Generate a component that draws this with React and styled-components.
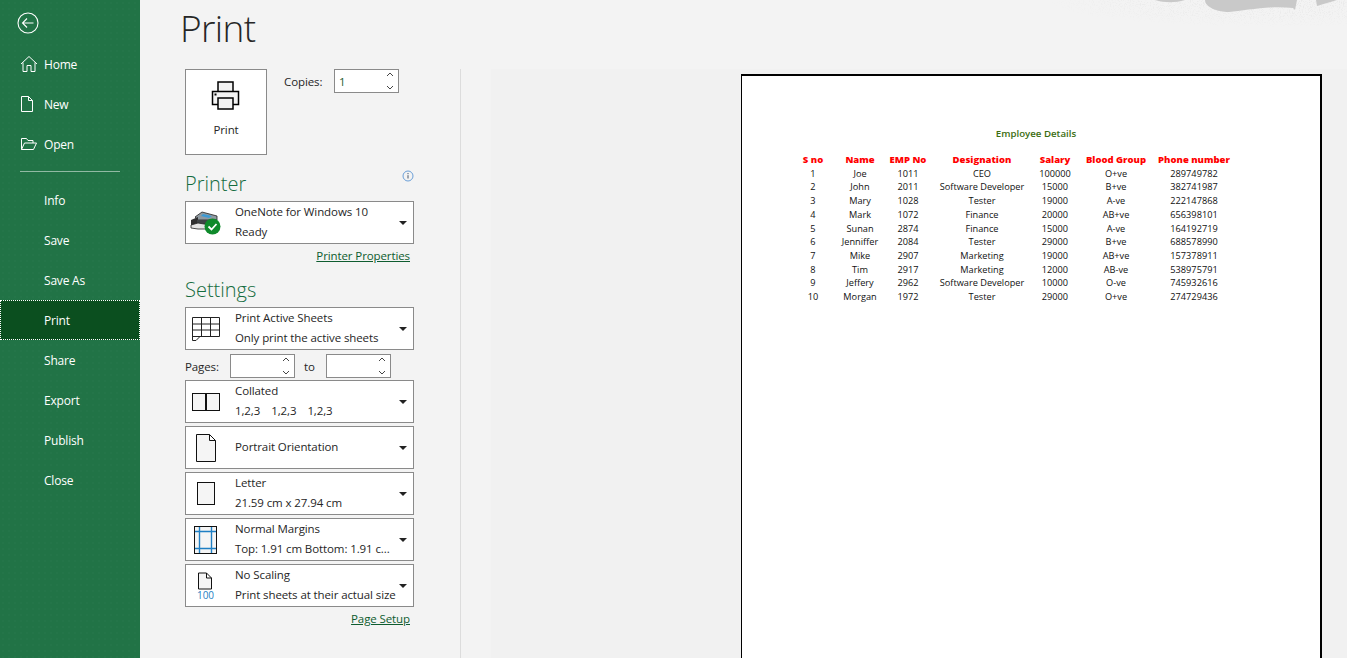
import React from 'react';
import styled, { createGlobalStyle } from 'styled-components';

const GlobalStyle = createGlobalStyle`
  html, body {
    margin: 0;
    padding: 0;
    background: #f3f3f3;
    font-family: "Open Sans", "Liberation Sans", sans-serif;
  }
`;

const navTop = ['Home', 'New', 'Open'];
const navBottom = ['Info', 'Save', 'Save As', 'Print', 'Share', 'Export', 'Publish', 'Close'];

const employees = [
  ['1', 'Joe', '1011', 'CEO', '100000', 'O+ve', '289749782'],
  ['2', 'John', '2011', 'Software Developer', '15000', 'B+ve', '382741987'],
  ['3', 'Mary', '1028', 'Tester', '19000', 'A-ve', '222147868'],
  ['4', 'Mark', '1072', 'Finance', '20000', 'AB+ve', '656398101'],
  ['5', 'Sunan', '2874', 'Finance', '15000', 'A-ve', '164192719'],
  ['6', 'Jenniffer', '2084', 'Tester', '29000', 'B+ve', '688578990'],
  ['7', 'Mike', '2907', 'Marketing', '19000', 'AB+ve', '157378911'],
  ['8', 'Tim', '2917', 'Marketing', '12000', 'AB-ve', '538975791'],
  ['9', 'Jeffery', '2962', 'Software Developer', '10000', 'O-ve', '745932616'],
  ['10', 'Morgan', '1972', 'Tester', '29000', 'O+ve', '274729436'],
];
const columns = ['S no', 'Name', 'EMP No', 'Designation', 'Salary', 'Blood Group', 'Phone number'];
const columnWidths = [46, 48, 48, 100, 46, 76, 80];

// 아이콘
const BackIcon = () => (
  <svg width="22" height="22" viewBox="0 0 22 22" fill="none" stroke="#fff" strokeWidth="1.1">
    <circle cx="11" cy="11" r="10" />
    <path d="M5.5 11h11M10 6.5 5.5 11l4.500 4.500" />
  </svg>
);

const HomeIcon = () => (
  <svg width="18" height="18" viewBox="0 0 18 18" fill="none" stroke="#fff" strokeWidth="1">
    <path d="M1 9 9 1.500 17 9M3 7.500V16.500H7V10.500H11V16.500H15V7.500" />
  </svg>
);

const NewIcon = () => (
  <svg width="14" height="18" viewBox="0 0 14 18" fill="none" stroke="#fff" strokeWidth="1">
    <path d="M1.500 1.500H8.500L12.500 5.500V16.500H1.500ZM8.500 1.500V5.500H12.500" />
  </svg>
);

const OpenIcon = () => (
  <svg width="18" height="14" viewBox="0 0 18 14" fill="none" stroke="#fff" strokeWidth="1">
    <path d="M1.500 12.500V1.500H6.500L8 3.500H13V6M1.500 12.500 4.500 6H16.500L13.500 12.500Z" />
  </svg>
);

const PrinterIcon = () => (
  <svg width="30" height="30" viewBox="0 0 30 30" fill="#f3f3f3" stroke="#000" strokeWidth="1.500">
    <rect x="7" y="1" width="15" height="10" />
    <rect x="1.500" y="10.500" width="26" height="13" />
    <rect x="7" y="17" width="15" height="11" />
    <rect x="3.500" y="12.500" width="2" height="2" fill="#000" stroke="none" />
  </svg>
);

const InfoIcon = () => (
  <svg width="12" height="12" viewBox="0 0 12 12" fill="none">
    <circle cx="6" cy="6" r="5" stroke="#6a9fd8" />
    <path d="M6 5.200v3.300M6 3v1.200" stroke="#44546a" />
  </svg>
);

const OneNotePrinterIcon = () => (
  <svg width="32" height="26" viewBox="0 0 32 26">
    <path d="M5 7 12 2 27 6 27 10 8 10Z" fill="#8f9aa1" stroke="#222" strokeWidth="0.800" />
    <path d="M13 4 22 6 19 8 11 6Z" fill="#3c9bd6" />
    <path d="M1 10 8 7 8 17 1 15Z" fill="#303030" />
    <path d="M7 10H27V17H7Z" fill="#3f4346" />
    <path d="M1 15 8 13 20 15 20 19 8 19 1 18Z" fill="#e4e4e4" stroke="#222" strokeWidth="0.800" />
    <circle cx="22.500" cy="16.500" r="8" fill="#0f8a2b" />
    <path d="M18.500 16.500 21.500 19.500 26.500 14" fill="none" stroke="#fff" strokeWidth="1.800" />
  </svg>
);

const SheetsIcon = () => (
  <svg width="30" height="26" viewBox="0 0 30 26" fill="none" stroke="#222" strokeWidth="1">
    <path d="M1.500 1.500H28.500V20.500H9L5 24.500H1.500ZM1.500 8H28.500M1.500 14H28.500M1.500 20.500H9M10.500 1.500V20.500M19.500 1.500V20.500" />
  </svg>
);

const CollatedIcon = () => (
  <svg width="30" height="20" viewBox="0 0 30 20" fill="#f5f5f5" stroke="#111" strokeWidth="1">
    <rect x="1.500" y="1.500" width="27" height="17" />
    <path d="M15 1.500V18.500" strokeWidth="2" />
  </svg>
);

const PortraitIcon = () => (
  <svg width="22" height="30" viewBox="0 0 22 30" fill="#f5f5f5" stroke="#111" strokeWidth="1">
    <path d="M1.500 1.500H14.500L20.500 7.500V28.500H1.500ZM14.500 1.500V7.500H20.500" />
  </svg>
);

const LetterIcon = () => (
  <svg width="18" height="24" viewBox="0 0 18 24" fill="#f5f5f5" stroke="#111" strokeWidth="1">
    <rect x="0.500" y="0.500" width="17" height="22" />
  </svg>
);

const MarginsIcon = () => (
  <svg width="24" height="28" viewBox="0 0 24 28" fill="#f5f5f5">
    <rect x="0.500" y="0.500" width="22" height="27" stroke="#111" />
    <path d="M5.500 1V27M17.500 1V27M1 5.500H22M1 22.500H22" stroke="#1f7fc4" strokeWidth="1.400" fill="none" />
  </svg>
);

const ScalingIcon = () => (
  <svg width="16" height="18" viewBox="0 0 16 18" fill="#f5f5f5" stroke="#111" strokeWidth="1">
    <path d="M1.500 1H9.500L14.500 6V17H1.500ZM9.500 1V6H14.500" />
  </svg>
);

const Arrows = () => (
  <svg width="8" height="20" viewBox="0 0 8 20" fill="none" stroke="#444" strokeWidth="1">
    <path d="M1 5 4 2 7 5M1 15 4 18 7 15" />
  </svg>
);

// 오른쪽 위 배경 무늬
const Texture = () => (
  <TextureSvg width="300" height="40" viewBox="0 0 300 40">
    <defs>
      <filter id="speckle">
        <feTurbulence type="fractalNoise" baseFrequency="0.9" numOctaves="2" seed="4" />
        <feColorMatrix values="0 0 0 0 0.78  0 0 0 0 0.78  0 0 0 0 0.78  0 0 0 5 -2.600" />
      </filter>
      <radialGradient id="fade" cx="0.75" cy="0" r="0.75">
        <stop offset="0" stopColor="#fff" stopOpacity="0.8" />
        <stop offset="0.6" stopColor="#fff" stopOpacity="0.45" />
        <stop offset="1" stopColor="#fff" stopOpacity="0" />
      </radialGradient>
      <mask id="fadeMask">
        <rect width="300" height="36" fill="url(#fade)" />
      </mask>
    </defs>
    <rect width="300" height="36" filter="url(#speckle)" mask="url(#fadeMask)" />
    <path d="M158 0C158 7 170 12 182 12C198 11 222 5 246 8L248 10 250 0Z" fill="#c9c9c9" />
    <path d="M108 0C118 3 128 3 138 0Z" fill="#c9c9c9" />
    <path d="M269 0 270 6C276 4 284 2 290 0Z" fill="#c9c9c9" />
  </TextureSvg>
);

const Dropdown = ({ icon, title, sub }) => (
  <DropdownBox>
    <DropdownIcon>{icon}</DropdownIcon>
    <DropdownText>
      <span>{title}</span>
      {sub && <span>{sub}</span>}
    </DropdownText>
    <Caret />
  </DropdownBox>
);

const App = () => {
  return (
    <Page>
      <GlobalStyle />
      <Sidebar>
        <BackButton>
          <BackIcon />
        </BackButton>
        {navTop.map((name, i) => (
          <NavItem key={name}>
            <NavIcon>{[<HomeIcon />, <NewIcon />, <OpenIcon />][i]}</NavIcon>
            {name}
          </NavItem>
        ))}
        <NavLine />
        {navBottom.map((name) => (
          <NavItem key={name} $active={name === 'Print'} $plain>
            {name}
          </NavItem>
        ))}
      </Sidebar>

      <Main>
        <Texture />
        <Title>Print</Title>
        <Body>
          <Options>
            <PrintRow>
              <PrintButton>
                <PrinterIcon />
                Print
              </PrintButton>
              <Copies>
                <CopiesLabel>Copies:</CopiesLabel>
                <Spinner>
                  <SpinnerValue>1</SpinnerValue>
                  <Arrows />
                </Spinner>
              </Copies>
            </PrintRow>

            <HeadingRow>
              <Heading>Printer</Heading>
              <InfoIcon />
            </HeadingRow>
            <Dropdown icon={<OneNotePrinterIcon />} title="OneNote for Windows 10" sub="Ready" />
            <LinkRow>
              <TextLink>Printer Properties</TextLink>
            </LinkRow>

            <SettingsHeading>Settings</SettingsHeading>
            <Dropdown icon={<SheetsIcon />} title="Print Active Sheets" sub="Only print the active sheets" />
            <PagesRow>
              <span>Pages:</span>
              <Spinner>
                <SpinnerValue />
                <Arrows />
              </Spinner>
              <PagesTo>to</PagesTo>
              <Spinner>
                <SpinnerValue />
                <Arrows />
              </Spinner>
            </PagesRow>
            <DropdownStack>
              <Dropdown
                icon={<CollatedIcon />}
                title="Collated"
                sub={
                  <CollateNumbers>
                    <span>1,2,3</span>
                    <span>1,2,3</span>
                    <span>1,2,3</span>
                  </CollateNumbers>
                }
              />
              <Dropdown icon={<PortraitIcon />} title="Portrait Orientation" />
              <Dropdown icon={<LetterIcon />} title="Letter" sub="21.59 cm x 27.94 cm" />
              <Dropdown icon={<MarginsIcon />} title="Normal Margins" sub="Top: 1.91 cm Bottom: 1.91 c..." />
              <Dropdown
                icon={
                  <ScalingWrap>
                    <ScalingIcon />
                    <ScalingLabel>100</ScalingLabel>
                  </ScalingWrap>
                }
                title="No Scaling"
                sub="Print sheets at their actual size"
              />
            </DropdownStack>
            <LinkRow>
              <TextLink>Page Setup</TextLink>
            </LinkRow>
          </Options>

          <Preview>
            <Sheet>
              <SheetTitle>Employee Details</SheetTitle>
              <SheetTable>
                <colgroup>
                  {columnWidths.map((w, i) => (
                    <col key={i} width={w} />
                  ))}
                </colgroup>
                <thead>
                  <tr>
                    {columns.map((c) => (
                      <th key={c}>{c}</th>
                    ))}
                  </tr>
                </thead>
                <tbody>
                  {employees.map((row) => (
                    <tr key={row[0]}>
                      {row.map((cell, i) => (
                        <td key={i}>{cell}</td>
                      ))}
                    </tr>
                  ))}
                </tbody>
              </SheetTable>
            </Sheet>
          </Preview>
        </Body>
      </Main>
    </Page>
  );
};

const Page = styled.div`
  display: flex;
  width: 100%;
  height: 658px;
  overflow: hidden;
  background: #f3f3f3;
  color: #262626;
  font-size: 11.5px;
  letter-spacing: -0.1px;
`;

/* 왼쪽 초록 메뉴 */
const Sidebar = styled.nav`
  flex: 0 0 140px;
  display: flex;
  flex-direction: column;
  padding-top: 1px;
  box-sizing: border-box;
  background-color: #217346;
  background-image: radial-gradient(rgba(255, 255, 255, 0.015) 1px, transparent 1px);
  background-size: 6px 6px;
  color: #fff;
`;

const BackButton = styled.div`
  height: 43px;
  padding-left: 17px;
  display: flex;
  align-items: center;
`;

const NavItem = styled.div`
  height: 40px;
  flex: none;
  box-sizing: border-box;
  display: flex;
  align-items: center;
  padding-left: ${(props) => (props.$plain ? '44px' : '20px')};
  font-size: 12px;
  letter-spacing: -0.2px;
  background: ${(props) => (props.$active ? '#0b4f1f' : 'transparent')};
  outline: ${(props) => (props.$active ? '1px dotted #fff' : 'none')};
  outline-offset: -1px;
`;

const NavIcon = styled.span`
  width: 24px;
  display: flex;
  align-items: center;
`;

const NavLine = styled.div`
  height: 1px;
  margin: 7px 20px 8px;
  background: rgba(255, 255, 255, 0.5);
`;

const Main = styled.main`
  position: relative;
  flex: 1;
  min-width: 0;
`;

const TextureSvg = styled.svg`
  position: absolute;
  top: 0;
  right: 0;
`;

const Title = styled.h1`
  height: 69px;
  margin: 0;
  padding-left: 40px;
  box-sizing: border-box;
  font-size: 37px;
  font-weight: 300;
  letter-spacing: -0.6px;
  line-height: 55px;
  color: #262626;
`;

const Body = styled.div`
  display: flex;
  height: 589px;
`;

const Options = styled.section`
  flex: 0 0 275px;
  padding-left: 45px;
  border-right: 1px solid #dcdcdc;
`;

const PrintRow = styled.div`
  display: flex;
  gap: 17px;
  width: 229px;
`;

const PrintButton = styled.div`
  width: 82px;
  height: 86px;
  flex: none;
  box-sizing: border-box;
  border: 1px solid #8a8a8a;
  background: #fff;
  display: flex;
  flex-direction: column;
  align-items: center;
  gap: 11px;
  padding-top: 11px;
  color: #262626;
`;

const Copies = styled.div`
  display: flex;
  align-items: center;
  height: 24px;
`;

const CopiesLabel = styled.span`
  width: 50px;
`;

const Spinner = styled.div`
  width: 65px;
  height: 24px;
  flex: none;
  box-sizing: border-box;
  border: 1px solid #8a8a8a;
  background: #fff;
  display: flex;
  align-items: center;
  padding: 0 4px;
`;

const SpinnerValue = styled.span`
  flex: 1;
  color: #1f5c2f;
`;

const HeadingRow = styled.div`
  display: flex;
  justify-content: space-between;
  align-items: flex-start;
  width: 229px;
  height: 46px;
  padding-top: 15px;
  box-sizing: border-box;
`;

const Heading = styled.h2`
  margin: 0;
  font-size: 20px;
  font-weight: 300;
  line-height: 27px;
  letter-spacing: 0;
  color: #146c3e;
`;

const SettingsHeading = styled(Heading)`
  height: 39px;
  padding-top: 8px;
  box-sizing: border-box;
`;

const DropdownBox = styled.div`
  width: 229px;
  height: 43px;
  flex: none;
  box-sizing: border-box;
  border: 1px solid #8a8a8a;
  background: #fff;
  display: flex;
  align-items: center;
`;

const DropdownIcon = styled.div`
  flex: 0 0 49px;
  display: flex;
  justify-content: center;
  padding-right: 10px;
  box-sizing: border-box;
`;

const DropdownText = styled.div`
  flex: 1;
  min-width: 0;
  display: flex;
  flex-direction: column;
  gap: 3px;
  padding-bottom: 2px;
  line-height: 17px;
  white-space: nowrap;
`;

const Caret = styled.span`
  flex: none;
  width: 0;
  height: 0;
  margin-right: 6px;
  border-left: 4px solid transparent;
  border-right: 4px solid transparent;
  border-top: 4px solid #222;
`;

const CollateNumbers = styled.span`
  display: flex;
  gap: 11px;
`;

const ScalingWrap = styled.div`
  display: flex;
  flex-direction: column;
  align-items: center;
`;

const ScalingLabel = styled.span`
  font-size: 10px;
  line-height: 10px;
  color: #1f7fc4;
`;

const LinkRow = styled.div`
  width: 225px;
  height: 24px;
  padding-bottom: 2px;
  box-sizing: border-box;
  display: flex;
  justify-content: flex-end;
  align-items: center;
`;

const TextLink = styled.a`
  color: #0e5c2f;
  text-decoration: underline;
`;

const PagesRow = styled.div`
  display: flex;
  align-items: center;
  height: 30px;
  padding-top: 2px;
  box-sizing: border-box;

  > span:first-child {
    width: 45px;
  }
`;

const PagesTo = styled.span`
  width: 31px;
  padding-left: 9px;
  box-sizing: border-box;
`;

const DropdownStack = styled.div`
  display: flex;
  flex-direction: column;
  gap: 3px;
`;

const Preview = styled.section`
  flex: 1;
  margin-left: 30px;
  background: #f1f1f1;
  padding: 5px 0 0 250px;
  overflow: hidden;
`;

const Sheet = styled.div`
  width: 581px;
  height: 700px;
  box-sizing: border-box;
  background: #fff;
  border: 2px solid #000;
  border-left-width: 1px;
  padding: 51px 0 0 48px;
  color: #111;
  letter-spacing: 0;
`;

const SheetTitle = styled.div`
  width: 492px;
  text-align: center;
  font-size: 9.7px;
  font-weight: 600;
  line-height: 13px;
  color: #3b6d11;
  margin-bottom: 13px;
`;

const SheetTable = styled.table`
  table-layout: fixed;
  width: 444px;
  border-collapse: collapse;
  font-size: 9.2px;
  font-weight: 500;

  th,
  td {
    padding: 0;
    height: 13.7px;
    line-height: 13.7px;
    text-align: center;
    white-space: nowrap;
  }

  th {
    color: #f00;
    font-size: 9.5px;
    font-weight: 800;
  }
`;

export default App;
